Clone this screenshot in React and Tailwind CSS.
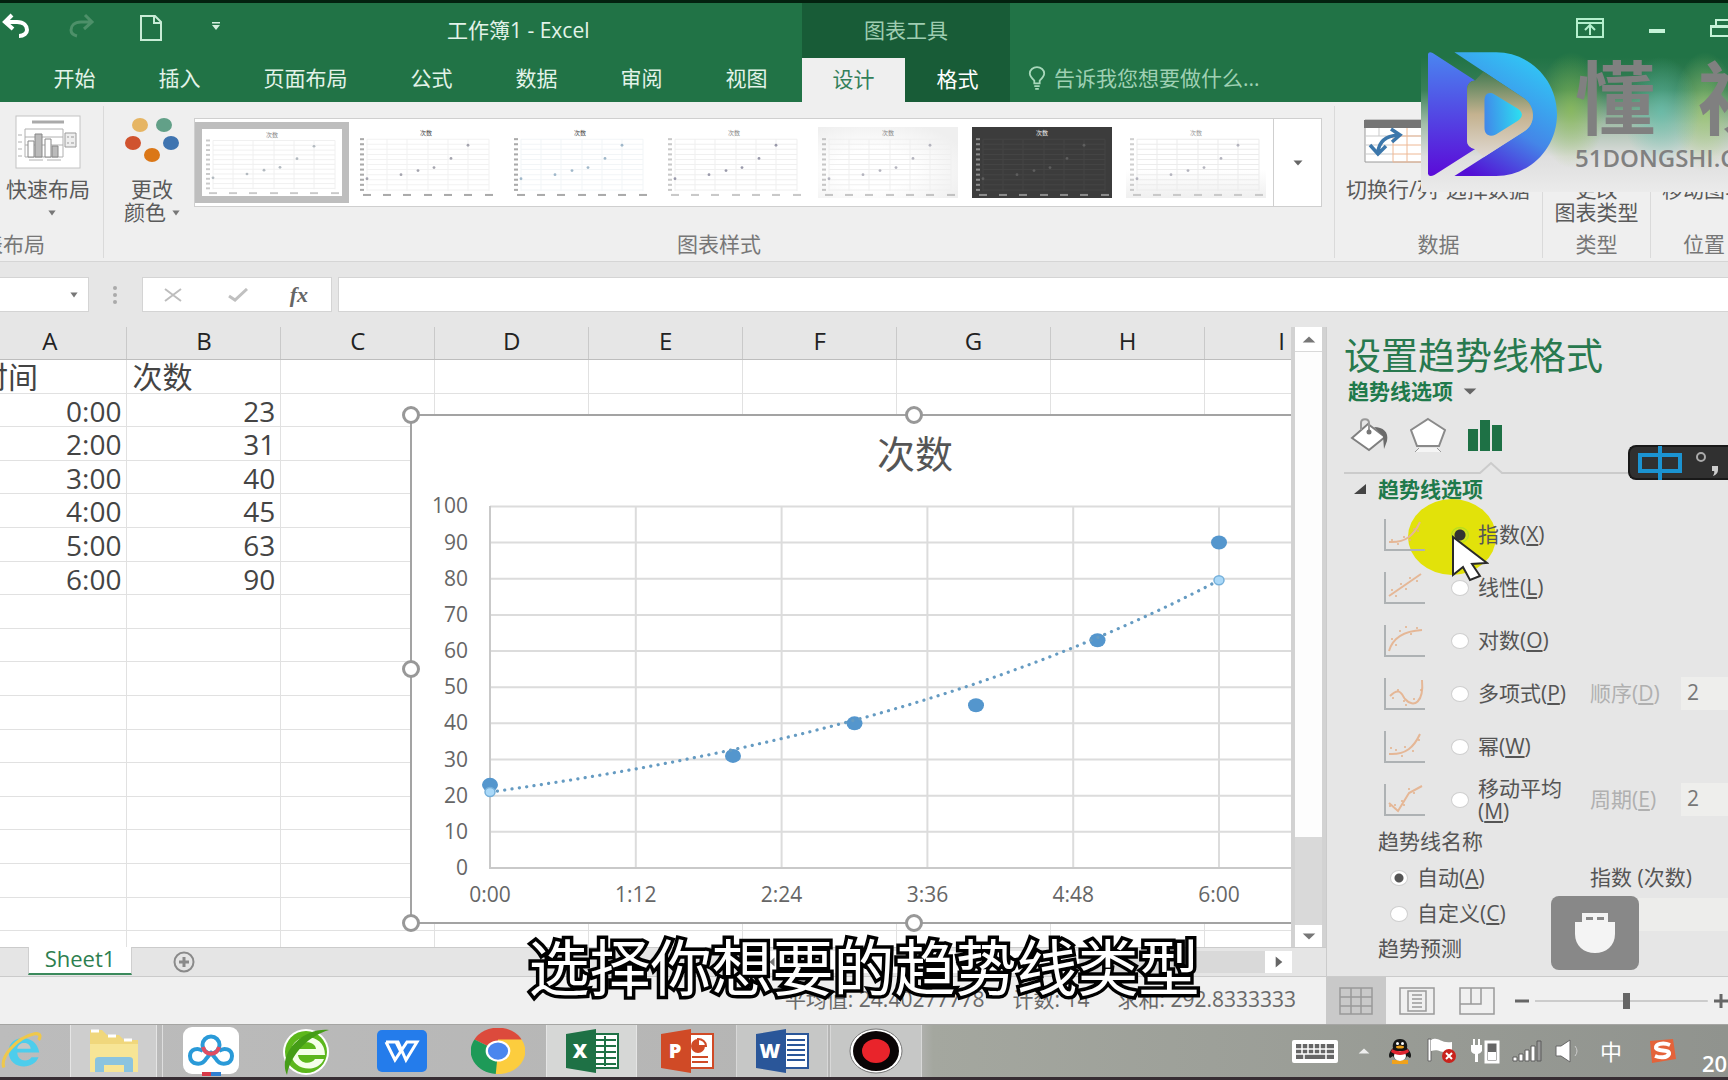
import React from "react";

const TABS = [
  ["开始", "w-[105px]"],
  ["插入", "w-[105px]"],
  ["页面布局", "w-[147px]"],
  ["公式", "w-[105px]"],
  ["数据", "w-[105px]"],
  ["审阅", "w-[105px]"],
  ["视图", "w-[105px]"],
];

const ROWS = [
  ["时间", "次数"],
  ["0:00", "23"],
  ["2:00", "31"],
  ["3:00", "40"],
  ["4:00", "45"],
  ["5:00", "63"],
  ["6:00", "90"],
];

const COLUMNS = ["A", "B", "C", "D", "E", "F", "G", "H", "I"];

const POINTS = [
  [0, 23],
  [2, 31],
  [3, 40],
  [4, 45],
  [5, 63],
  [6, 90],
];

function Caret({ className = "" }) {
  return (
    <svg className={className} width="10" height="6" viewBox="0 0 10 6" preserveAspectRatio="none" aria-hidden="true">
      <path d="M0.5 0.5h9L5 5.5z" fill="currentColor" />
    </svg>
  );
}

function Header() {
  return (
    <header className="flex h-[102px] shrink-0 border-t-[3px] border-[#03210f] bg-[#217346] text-[21px] leading-6 text-[#e3f3e9]">
      <div className="flex w-[802px] shrink-0 flex-col">
        <div className="flex h-[53px] items-center">
          <button aria-label="撤消" className="ml-px w-7 pb-2">
            <svg width="28" height="26" viewBox="0 0 28 26" fill="none" stroke="#fff" strokeWidth="4">
              <path d="M11 2 4 9l8 7M5 9h11c7 0 10 4 10 8 0 3-3 6-8 6" />
            </svg>
          </button>
          <button aria-label="恢复" className="ml-[39px] w-7 pb-2">
            <svg width="28" height="26" viewBox="0 0 28 26" fill="none" stroke="#4d9069" strokeWidth="3">
              <path d="M17 2l7 7-8 7M24 9H13c-7 0-10 4-10 8 0 3 2 5 6 6" />
            </svg>
          </button>
          <button aria-label="新建" className="ml-[43px] w-6 pb-1">
            <svg width="24" height="28" viewBox="0 0 24 28" fill="none" stroke="#c8ecd6" strokeWidth="2">
              <path d="M2 2h14l6 6v18H2zM15 2v7h7" />
            </svg>
          </button>
          <button aria-label="自定义快速访问工具栏" className="ml-12 pb-2">
            <svg width="10" height="8" viewBox="0 0 10 8">
              <path d="M1 0h8v1.500H1zM1 3h8L5 8z" fill="#d5efdf" />
            </svg>
          </button>
          <h1 className="ml-[226px] whitespace-nowrap">工作簿1 - Excel</h1>
        </div>
        <nav className="flex h-[46px] pl-[22px]">
          {TABS.map(([name, w]) => (
            <button key={name} className={`${w} shrink-0 pb-0.5`}>
              {name}
            </button>
          ))}
        </nav>
      </div>
      <div className="flex w-52 shrink-0 flex-col bg-[#185c37]">
        <div className="flex h-[55px] items-center justify-center pb-0.5 text-[#9fcdb1]">图表工具</div>
        <div className="flex h-[44px]">
          <button className="w-[103px] bg-[#efefef] pb-0.5 text-[#33805a]">设计</button>
          <button className="flex-1 pb-0.5 text-white">格式</button>
        </div>
      </div>
      <div className="flex flex-1 flex-col">
        <div className="flex h-[53px] items-center justify-end gap-[45px] overflow-hidden pb-1">
          <button aria-label="功能区显示选项">
            <svg width="28" height="20" viewBox="0 0 28 20" fill="none" stroke="#b4efcd" strokeWidth="2">
              <path d="M1 1h26v18H1zM1 5h26M14 17V8M9 12l5-5 5 5" />
            </svg>
          </button>
          <button aria-label="最小化">
            <svg width="16" height="20" viewBox="0 0 16 20">
              <path d="M0 11h16v4H0z" fill="#c5f3d8" />
            </svg>
          </button>
          <button aria-label="还原" className="w-[18px] overflow-hidden">
            <svg width="28" height="20" viewBox="0 0 28 20" fill="none" stroke="#c5f3d8" strokeWidth="2">
              <path d="M1 8h18v10H1zM1 9h18M6 7V2h19v12h-5" />
            </svg>
          </button>
        </div>
        <label className="flex h-[46px] items-center gap-2 pb-0.5 pl-[18px] text-[#9fd0b3]">
          <svg width="18" height="24" viewBox="0 0 20 26" fill="none" stroke="#a8d8bb" strokeWidth="2">
            <path d="M7 19v-3c-3-3-5-5-5-8a8 7 0 0 1 16 0c0 3-2 5-5 8v3zM7 19h6M7 22h6M8 25h4" />
          </svg>
          <input
            aria-label="告诉我您想要做什么"
            placeholder="告诉我您想要做什么..."
            className="w-60 bg-transparent outline-none placeholder:text-[#9fd0b3]"
          />
        </label>
      </div>
    </header>
  );
}

const THUMB_STYLES = [
  { fill: "#ffffff", dot: "#b3bac0", grid: "#f0f0f0", text: "#888" },
  { fill: "#ffffff", dot: "#a4a4ae", grid: "#f2f2f2", text: "#444" },
  { fill: "#ffffff", dot: "#a0b8ca", grid: "#f2f5f7", text: "#444" },
  { fill: "#ffffff", dot: "#99a", grid: "#f0f0f0", text: "#888" },
  { fill: "url(#vignette)", dot: "#b4b4be", grid: "#efefef", text: "#888" },
  { fill: "#3c3c3c", dot: "#5e5e5e", grid: "#444444", text: "#eee" },
  { fill: "url(#floor)", dot: "#b4b4be", grid: "#ececec", text: "#999" },
];

function Thumb({ fill, dot, grid, text }) {
  const xs = [11, 31, 51, 72, 92, 112, 133];
  const ys = [12, 17, 22, 27, 32, 37, 42, 47, 52, 57, 62];
  return (
    <svg className="h-full w-full" viewBox="0 0 140 70" preserveAspectRatio="none" aria-hidden="true">
      <defs>
        <radialGradient id="vignette" cx="0.4" cy="0.6" r="0.7">
          <stop offset="0.4" stopColor="#fff" />
          <stop offset="1" stopColor="#efefef" />
        </radialGradient>
        <linearGradient id="floor" x1="0" y1="0" x2="0" y2="1">
          <stop offset="0.6" stopColor="#fff" />
          <stop offset="1" stopColor="#f0f0f0" />
        </linearGradient>
      </defs>
      <rect width="140" height="70" fill={fill} />
      <path
        d={xs.map((x) => `M${x} 12V63`).join("") + ys.map((y) => `M11 ${y}H133`).join("")}
        stroke={grid}
        fill="none"
      />
      <text x="70" y="8" textAnchor="middle" fontSize="6" fill={text}>
        次数
      </text>
      <g fill={text} opacity="0.45">
        {ys.map((y) => (
          <rect key={y} x="4" y={y - 1} width="4" height="2" />
        ))}
        {xs.map((x) => (
          <rect key={x} x={x - 4} y="66" width="8" height="2" />
        ))}
      </g>
      {[[11, 51], [45, 47], [62, 43], [78, 40], [95, 31], [112, 18]].map(([x, y]) => (
        <circle key={x} cx={x} cy={y} r="1.400" fill={dot} />
      ))}
    </svg>
  );
}

function RibbonButton({ icon, lines, caret, className = "" }) {
  return (
    <button className={`flex shrink-0 flex-col items-center justify-start whitespace-nowrap ${className}`}>
      <span className="flex h-[63px] items-end">{icon}</span>
      <span className="mt-[9px] block leading-[23px]">{lines[0]}</span>
      <span className="flex h-[23px] items-center leading-[23px]">
        {lines[1]}
        {caret && <Caret className={lines[1] ? "ml-1.5 w-2 text-[#777]" : "ml-2 w-2 text-[#777]"} />}
      </span>
    </button>
  );
}

function Group({ label, className = "", children }) {
  return (
    <section className={`flex h-[152px] shrink-0 flex-col border-r border-[#dadada] ${className}`}>
      <div className="flex h-[124px]">{children}</div>
      <div className="pt-0.5 text-center leading-7 text-[#777]">{label}</div>
    </section>
  );
}

const layoutIcon = (
  <svg width="66" height="54" viewBox="0 0 66 54">
    <rect x="1" y="1" width="64" height="52" fill="#fff" stroke="#c4c4c4" />
    <path d="M17 7h32" stroke="#aaa" strokeWidth="3" />
    <path d="M10 14h38v28H10zM10 22h38M10 30h38M3 20h4M3 27h4M3 34h4M3 41h4M14 45h14M32 45h14" stroke="#b0b0b0" fill="none" />
    <path d="M13 26h6v16h-6zM30 24h6v18h-6z" fill="#fff" stroke="#888" />
    <path d="M20 19h7v23h-7zM37 31h6v11h-6z" fill="#bbb" stroke="#888" />
    <path d="M50 18h11v14H50zM52 22h2m2 0h3M52 28h2m2 0h3" stroke="#999" fill="#eee" />
  </svg>
);

const colorsIcon = (
  <svg width="54" height="46" viewBox="0 0 54 46">
    <ellipse cx="15" cy="8" rx="8" ry="7" fill="#e6b563" />
    <ellipse cx="39" cy="8" rx="8" ry="7" fill="#62a088" />
    <ellipse cx="8" cy="26" rx="8" ry="7" fill="#d0532f" />
    <ellipse cx="46" cy="26" rx="8" ry="7" fill="#3f74b0" />
    <ellipse cx="27" cy="38" rx="8" ry="7" fill="#db7717" />
  </svg>
);

const swapIcon = (
  <svg width="64" height="44" viewBox="0 0 64 44">
    <path d="M1 1h62v42H1z" fill="#fff" stroke="#9a9a9a" />
    <path d="M0 1h64v8H0z" fill="#757575" />
    <path d="M1 17h62M1 26h28M1 35h28M15 9v8" stroke="#c9c9c9" />
    <path d="M29 17h29v26H29zM29 26h29M29 35h29M43 9v34" stroke="#eeb894" fill="none" />
    <path d="M14 33c1-10 7-16 20-17M6 26l8 9 8-8M27 10l9 6-8 7" stroke="#3c77ab" strokeWidth="3.500" fill="none" />
  </svg>
);

function Ribbon() {
  return (
    <div className="relative flex h-[160px] shrink-0 overflow-hidden border-b border-[#d5d5d5] bg-[#efefef] pt-1 text-[21px] leading-[30px] text-[#5a5a5a]">
      <Group label="图表布局" className="-ml-[97px] w-[201px]">
        <RibbonButton className="ml-[103px]" icon={layoutIcon} lines={["快速布局", ""]} caret />
      </Group>
      <Group label={<span>图表样式</span>} className="w-[1231px]">
        <RibbonButton className="ml-4 w-16" icon={<span className="mb-1.5 flex">{colorsIcon}</span>} lines={["更改", "颜色"]} caret />
        <div className="ml-[10px] mt-3 flex h-[89px] w-[1128px] border border-[#cfcfcf] bg-white">
          {THUMB_STYLES.map((s, i) => (
            <button
              key={i}
              aria-label={`样式 ${i + 1}`}
              className={`mt-[3px] h-[81px] w-[154px] shrink-0 ${i === 0 ? "border-[7px] border-[#bebebe]" : "px-[7px] py-[5px]"}`}
            >
              <Thumb {...s} />
            </button>
          ))}
          <button aria-label="更多样式" className="flex flex-1 items-center justify-center border-l border-[#cfcfcf] text-[#666]">
            <Caret />
          </button>
        </div>
      </Group>
      <Group label="数据" className="w-[208px]">
        <RibbonButton className="ml-[11px]" icon={<span className="mb-[6px] ml-2 flex">{swapIcon}</span>} lines={["切换行/列", ""]} />
        <RibbonButton className="ml-2" icon={null} lines={["选择数据", ""]} />
      </Group>
      <Group label="类型" className="w-[108px]">
        <RibbonButton className="mx-auto" icon={null} lines={["更改", "图表类型"]} />
      </Group>
      <Group label="位置" className="w-[107px]">
        <RibbonButton className="ml-[11px]" icon={null} lines={["移动图表", ""]} />
      </Group>
    </div>
  );
}

function Watermark() {
  return (
    <div className="absolute right-0 top-[50px] flex h-[142px] w-[307px] overflow-hidden bg-[radial-gradient(ellipse_34px_58px_at_150px_60px,#8fc04daa,transparent),radial-gradient(ellipse_38px_55px_at_240px_62px,#62c3b4aa,transparent),radial-gradient(ellipse_32px_60px_at_284px_62px,#a8cf70aa,transparent),linear-gradient(#217346_5%,#388057_28%,#a3bda9_52%,#dedede_75%,#ebebeb)]">
      <svg className="ml-[7px] mt-[2px] shrink-0" width="129" height="124" viewBox="564 154 386 371" aria-label="懂视">
        <defs>
          <linearGradient id="wmLeft" x1="0" y1="0" x2="0" y2="1">
            <stop offset="0" stopColor="#4a86f0" />
            <stop offset="1" stopColor="#5b0bd8" />
          </linearGradient>
          <linearGradient id="wmRight" x1="0.7" y1="0" x2="0.2" y2="1">
            <stop offset="0" stopColor="#30c8f5" />
            <stop offset="0.55" stopColor="#4486e8" />
            <stop offset="1" stopColor="#530fd5" />
          </linearGradient>
          <linearGradient id="wmPlay" x1="0" y1="0.6" x2="1" y2="0.5">
            <stop offset="0" stopColor="#4188ea" />
            <stop offset="1" stopColor="#2ce0f0" />
          </linearGradient>
          <linearGradient id="wmRing" x1="0" y1="0" x2="0" y2="1">
            <stop offset="0" stopColor="#437a51" />
            <stop offset="0.5" stopColor="#c4b28f" />
            <stop offset="1" stopColor="#e0d9d2" />
          </linearGradient>
        </defs>
        <path d="M564 160q2-8 14-3l127 82q-23 2-24 26v155q1 20 24 24l-122 78q-17 7-19-4z" fill="url(#wmLeft)" />
        <path d="M643 155h125c98 0 182 80 182 185s-84 185-182 185H643l208-133c36-22 36-75 0-100z" fill="url(#wmRight)" />
        <path d="M705 239q-23 2-24 26v155q1 20 24 24l25 25 121-77c36-22 36-75 0-100L730 212z" fill="url(#wmRing)" />
        <path d="M733 300c0-22 14-29 30-19l70 43c16 11 16 25 0 36l-66 41c-20 9-34 0-34-20z" fill="url(#wmPlay)" />
      </svg>
      <div className="ml-[18px] mt-1 shrink-0 whitespace-nowrap font-semibold text-[#808080]">
        <div className="flex gap-[42px] text-[80px] font-bold leading-[86px]">
          <span>懂</span>
          <span>视</span>
        </div>
        <div className="text-2xl leading-9">51DONGSHI.COM</div>
      </div>
    </div>
  );
}

function FormulaBar() {
  return (
    <div className="flex h-[65px] shrink-0 items-start bg-[#e6e6e6] pt-[15px]">
      <div className="flex h-[35px] w-[89px] items-center justify-end border border-l-0 border-[#d4d4d4] bg-white pr-2.5 text-[#777]">
        <input aria-label="名称框" className="w-14 bg-transparent outline-none" />
        <Caret className="w-2" />
      </div>
      <svg className="ml-[23px] mt-2" width="6" height="20" viewBox="0 0 6 20" fill="#aaa">
        <circle cx="3" cy="3" r="2" />
        <circle cx="3" cy="10" r="2" />
        <circle cx="3" cy="17" r="2" />
      </svg>
      <div className="ml-6 flex h-[35px] w-[190px] items-center justify-between border border-[#d4d4d4] bg-white px-[21px]">
        <button aria-label="取消">
          <svg width="18" height="14" viewBox="0 0 18 14" stroke="#bdbdbd" strokeWidth="2">
            <path d="M1 1l16 12M17 1 1 13" />
          </svg>
        </button>
        <button aria-label="输入" className="ml-1">
          <svg width="20" height="14" viewBox="0 0 20 14" stroke="#c0c0c0" strokeWidth="3" fill="none">
            <path d="M1 8l6 4L19 1" />
          </svg>
        </button>
        <button className="pr-0.5 font-['Liberation_Serif',serif] text-[22px] font-bold italic leading-6 text-[#666]">fx</button>
      </div>
      <input aria-label="编辑栏" className="ml-[6px] h-[35px] min-w-0 flex-1 border border-r-0 border-[#d4d4d4] bg-white outline-none" />
    </div>
  );
}

/* Plot origin is (79, 453) in chart coordinates; one hour is 121.5 wide and one unit 3.616 high. */
const px = (h) => 79 + h * 121.5;
const py = (v) => 453 - v * 3.616;

function Chart() {
  const trend = Array.from({ length: 61 }, (_, i) => {
    const h = i / 10;
    return `${i ? "L" : "M"}${px(h).toFixed(1)} ${py(21 * Math.exp(0.222 * h)).toFixed(1)}`;
  }).join("");
  const ticks = Array.from({ length: 11 }, (_, i) => i * 10);
  const handles = [[0, 0], [503, 0], [0, 254], [0, 508], [503, 508]];
  return (
    <svg className="absolute left-[402px] top-[79px]" width="1020" height="526" viewBox="-9 -9 1020 526" role="img" aria-label="次数">
      <rect x="0" y="0" width="1006" height="508" fill="#fff" stroke="#a3a3a3" strokeWidth="2" />
      <path
        d={ticks.map((t) => `M79 ${py(t)}H926`).join("") + [0, 1, 2, 3, 4, 5].map((i) => `M${79 + i * 145.8} 91V453`).join("")}
        stroke="#dcdcdc"
        strokeWidth="2"
      />
      <path d="M79 91V453H926" stroke="#c9c9c9" strokeWidth="2" fill="none" />
      <text x="504" y="53" textAnchor="middle" fontSize="38" fill="#555">
        次数
      </text>
      <g fontSize="21" fill="#666">
        {ticks.map((t) => (
          <text key={t} x="57" y={py(t) + 7} textAnchor="end">
            {t}
          </text>
        ))}
        {["0:00", "1:12", "2:24", "3:36", "4:48", "6:00"].map((t, i) => (
          <text key={t} x={79 + i * 145.8} y="487" textAnchor="middle">
            {t}
          </text>
        ))}
      </g>
      {POINTS.map(([h, v]) => (
        <ellipse key={h} cx={px(h)} cy={py(v)} rx="8" ry="7" fill="#5496cd" />
      ))}
      <path d={trend} fill="none" stroke="#659bc2" strokeWidth="3.200" strokeLinecap="round" strokeDasharray="0.1 7.300" />
      {[[0, 21], [6, 79.6]].map(([h, v]) => (
        <ellipse key={h} cx={px(h)} cy={py(v)} rx="5" ry="4.500" fill="#a9d8f8" stroke="#76b0da" strokeWidth="1.500" />
      ))}
      {handles.map(([x, y]) => (
        <circle key={`${x}-${y}`} cx={x} cy={y} r="7.500" fill="#fff" stroke="#989898" strokeWidth="3" />
      ))}
    </svg>
  );
}

function Sheet() {
  return (
    <div className="flex min-w-0 flex-1 flex-col">
      <div className="flex min-h-0 flex-1">
        <div className="relative min-w-0 flex-1 overflow-hidden bg-white">
          <table className="-ml-[27px] w-[1386px] table-fixed border-collapse text-[28px] text-[#444]">
            <thead>
              <tr className="h-8 bg-[#e6e6e6]">
                {COLUMNS.map((c) => (
                  <th key={c} className="h-8 border-b border-r border-b-[#bdbdbd] border-r-[#c9c9c9] p-0 pb-1 text-2xl font-normal leading-[26px] text-[#222]">
                    {c}
                  </th>
                ))}
              </tr>
            </thead>
            <tbody>
              {Array.from({ length: 18 }, (_, r) => (
                <tr key={r} className={r % 5 === 1 || r % 5 === 3 ? "h-[33px]" : "h-[34px]"}>
                  {COLUMNS.map((c, i) => (
                    <td
                      key={c}
                      className={`border-b border-r border-[#e1e1e1] px-[5px] pb-0 pt-0.5 leading-[30px] ${r === 0 ? "text-left text-[30px]" : "text-right"}`}
                    >
                      {ROWS[r] && ROWS[r][i]}
                    </td>
                  ))}
                </tr>
              ))}
            </tbody>
          </table>
          <Chart />
        </div>
        <div className="flex w-[35px] shrink-0 flex-col border-l-4 border-r-4 border-[#d2d2d2] bg-[#d9d9d9] text-[#777]">
          <button aria-label="向上滚动" className="flex h-6 items-center justify-center bg-white">
            <Caret className="h-[7px] w-3.5 rotate-180" />
          </button>
          <div className="mt-px h-[485px] bg-[#fdfdfd]" />
          <button aria-label="向下滚动" className="mt-auto flex h-[22px] items-center justify-center bg-white">
            <Caret className="h-[7px] w-3.5" />
          </button>
        </div>
      </div>
      <div className="flex h-[30px] shrink-0 border-b border-t border-[#cbcbcb] bg-[#e5e5e5]">
        <button className="-mt-px ml-7 h-7 w-[104px] border-x border-b-2 border-x-[#cfcfcf] border-b-[#3b8a5c] bg-white pb-1 text-[22px] leading-[22px] text-[#2d7f50]">
          Sheet1
        </button>
        <button aria-label="新工作表" className="ml-[41px]">
          <svg width="22" height="22" viewBox="0 0 22 22" fill="none" stroke="#8a8a8a" strokeWidth="2">
            <circle cx="11" cy="11" r="9.500" />
            <path d="M6 11h10M11 6v10" strokeWidth="3" />
          </svg>
        </button>
        <div className="ml-auto mr-[34px] mt-[3px] flex h-[22px] w-[534px]">
          <button aria-label="向左滚动" className="flex w-[27px] items-center justify-center bg-white text-[#777]">
            <Caret className="rotate-90" />
          </button>
          <div className="ml-1 flex flex-1 bg-[#d9d9d9]">
            <div className="w-[290px] bg-white" />
          </div>
          <button aria-label="向右滚动" className="flex w-[27px] items-center justify-center bg-white text-[#666]">
            <Caret className="h-2 w-3 -rotate-90" />
          </button>
        </div>
      </div>
    </div>
  );
}

const FITS = [
  { id: "exp", name: "指数", k: "X", d: "M5 23C22 24 30 16 36 3", dots: [[8, 21], [14, 25], [20, 18], [26, 21], [30, 10], [34, 12]] },
  { id: "lin", name: "线性", k: "L", d: "M5 24 37 2", dots: [[8, 18], [12, 24], [17, 12], [22, 17], [26, 6], [33, 9]] },
  { id: "log", name: "对数", k: "O", d: "M5 26C9 12 20 6 38 5", dots: [[8, 14], [12, 20], [16, 6], [22, 2], [27, 9], [33, 3]] },
  { id: "poly", name: "多项式", k: "P", d: "M6 18C16 8 18 17 21 21C30 31 40 24 38 2", dots: [[9, 20], [14, 12], [20, 23], [22, 27], [30, 21], [37, 12]], side: "顺序", sk: "D" },
  { id: "pow", name: "幂", k: "W", d: "M5 23C22 24 30 16 36 3", dots: [[7, 17], [12, 19], [18, 25], [21, 16], [29, 20], [35, 9]] },
  { id: "ma", name: "移动平均", k: "M", d: "M5 19l9 8 11-18 13-7", dots: [[6, 22], [11, 21], [18, 17], [20, 21], [25, 5], [30, 9]], side: "周期", sk: "E" },
];

const radioClass =
  "h-4 w-[18px] shrink-0 appearance-none rounded-[50%] border border-[#cfcfcf] bg-white";

function Key({ name, k }) {
  return (
    <>
      {name}(<u className="underline-offset-2">{k}</u>)
    </>
  );
}

function Pane() {
  return (
    <aside className="relative w-[402px] shrink-0 overflow-hidden border-b border-l border-[#cbcbcb] bg-[#e6e6e6] pl-[17px] text-[21px] text-[#555]">
      <h2 className="pt-[9px] text-[37px] leading-10 text-[#28794e]">设置趋势线格式</h2>
      <button className="ml-1 mt-0.5 flex items-center gap-2.5 font-bold leading-[26px] text-[#1f7a4b]">
        趋势线选项
        <Caret className="h-[7px] w-3.5 text-[#666]" />
      </button>
      <div className="mt-[13px] flex h-9 items-center pl-[6px]">
        <button aria-label="填充与线条">
          <svg width="40" height="34" viewBox="0 0 40 34">
            <path d="M2 20 18 6l17 13-16 13z" fill="#fff" stroke="#808080" strokeWidth="2" />
            <path d="M11 12V5c0-5 8-5 8 0v8" fill="none" stroke="#999" strokeWidth="2" />
            <circle cx="19" cy="14" r="2.500" fill="#777" />
            <path d="M24 9c9 0 15 5 13 14l-3 8-1-13z" fill="#6b6b6b" />
          </svg>
        </button>
        <button aria-label="效果" className="ml-5">
          <svg width="36" height="36" viewBox="0 0 36 36">
            <path d="M18 2 35 13l-6 16H7L1 13z" fill="#fff" stroke="#8a8a8a" strokeWidth="2" />
            <path d="M8 31h20l3 4H5z" fill="#f5f5f5" />
            <path d="M9 31l-4 4M27 31l4 4" stroke="#999" />
          </svg>
        </button>
        <button aria-label="趋势线选项" className="ml-[21px]">
          <svg width="36" height="32" viewBox="0 0 36 32" fill="#1e7145">
            <path d="M1 10h10v22H1zM13 1h10v31H13zM25 6h10v26H25z" />
          </svg>
        </button>
      </div>
      <svg className="mt-2 block" width="384" height="14" viewBox="0 0 384 14" fill="none" stroke="#cbcbcb" strokeWidth="2">
        <path d="M0 12h136l11-10 11 10h226" />
      </svg>
      <h3 className="mt-px flex items-center gap-3 pl-[10px] font-bold leading-[26px] text-[#1f7a4b]">
        <svg width="12" height="10" viewBox="0 0 12 10">
          <path d="M12 0v10H0z" fill="#444" />
        </svg>
        趋势线选项
      </h3>
      <div className="absolute left-[81px] top-[172px] h-[76px] w-[88px] rounded-[50%] bg-[#e2e20a]" />
      <div className="relative mt-[6px]">
        {FITS.map((f) => (
          <div key={f.id} className="flex h-[53px] items-center">
            <svg className="ml-[40px] shrink-0" width="41" height="32" viewBox="0 0 41 32" fill="none">
              <path d="M1 0v31h40" stroke="#aeb2b4" strokeWidth="2" />
              <path d={f.d} stroke="#e5b796" strokeWidth="2" />
              {f.dots.map(([x, y]) => (
                <circle key={x} cx={x} cy={y} r="1" fill="#e3b08a" />
              ))}
            </svg>
            <label className="ml-[26px] flex w-[139px] shrink-0 items-center gap-[9px] leading-[23px]">
              <input
                type="radio"
                name="fit"
                defaultChecked={f.id === "exp"}
                className={
                  f.id === "exp"
                    ? "h-4 w-[18px] shrink-0 appearance-none rounded-[50%] border border-[#b4dc1e] bg-[#d3e01c] checked:bg-[radial-gradient(circle,#333_0_5px,#d3e01c_6px)]"
                    : `${radioClass} checked:bg-[radial-gradient(circle,#444_0_5px,#fff_6px)]`
                }
              />
              <span className={f.id === "ma" ? "w-[90px]" : "whitespace-nowrap"}>
                <Key name={f.name} k={f.k} />
              </span>
            </label>
            {f.side && (
              <label className="flex items-center text-[#b0b0b0]">
                <span className="w-[91px] whitespace-nowrap">
                  <Key name={f.side} k={f.sk} />
                </span>
                <input disabled defaultValue="2" className="h-[33px] w-[60px] bg-[#eeeeec] px-1.5 pb-1 text-[#777]" />
              </label>
            )}
          </div>
        ))}
      </div>
      <h4 className="ml-[34px] mt-0.5 leading-[26px]">趋势线名称</h4>
      <div className="mt-[3px] pl-[46px]">
        <div className="flex h-[38px] items-center pt-1">
          <label className="flex w-[200px] items-center gap-[9px]">
            <input
              type="radio"
              name="title"
              defaultChecked
              className={`${radioClass} checked:bg-[radial-gradient(circle,#555_0_4px,#fff_5px)]`}
            />
            <span>
              <Key name="自动" k="A" />
            </span>
          </label>
          <span className="whitespace-nowrap">指数 (次数)</span>
        </div>
        <div className="flex h-[38px] items-center">
          <label className="flex w-[200px] items-center gap-[9px]">
            <input type="radio" name="title" className={`${radioClass} checked:bg-[radial-gradient(circle,#555_0_4px,#fff_5px)]`} />
            <span>
              <Key name="自定义" k="C" />
            </span>
          </label>
          <input disabled aria-label="自定义名称" className="h-[33px] w-40 bg-[#ededeb]" />
        </div>
      </div>
      <h4 className="ml-[34px] leading-[30px]">趋势预测</h4>

      <svg className="absolute left-[124px] top-[208px]" width="38" height="48" viewBox="0 0 38 48">
        <path d="M2 2v38l10-8 7 13 10-4-8-12 15-1z" fill="#fff" stroke="#2a2a2a" strokeWidth="2" />
      </svg>
      <div className="absolute right-0 top-[118px] flex h-[35px] w-[100px] items-center rounded-l-lg border-2 border-r-0 border-[#191919] bg-[#303030]">
        <svg width="98" height="34" viewBox="0 0 98 34" fill="none">
          <path d="M10 9h40v16H10zM30 0v34" stroke="#1b93d1" strokeWidth="4" />
          <circle cx="71" cy="11" r="4" stroke="#aaa" strokeWidth="2" />
          <path d="M82 20h6v4q0 4-5 6 2-4 1-5h-2z" fill="#ccc" />
        </svg>
      </div>
      <div className="absolute left-[224px] top-[569px] flex h-[74px] w-[88px] items-center justify-center rounded-lg bg-[#888]">
        <svg width="42" height="42" viewBox="0 0 42 42">
          <path d="M8 1h26v9h7v12C41 34 32 41 21 41S1 34 1 22V10h7z" fill="#f4f4f4" />
          <path d="M12 5h7v3h-7zM23 5h7v3h-7z" fill="#888" />
        </svg>
      </div>
    </aside>
  );
}

function StatusBar() {
  return (
    <footer className="flex h-[47px] shrink-0 bg-[#f0f0f0] text-[21px] leading-[45px] text-[#6a6a6a]">
      <div className="flex flex-1 justify-end gap-7 whitespace-nowrap pr-[30px]">
        <span>平均值: 24.40277778</span>
        <span>计数: 14</span>
        <span>求和: 292.8333333</span>
      </div>
      <div className="flex w-[402px] shrink-0 items-center">
        <button aria-label="普通" className="flex h-full w-[61px] items-center justify-center bg-[#c9c9c9]">
          <svg width="34" height="28" viewBox="0 0 34 28" fill="none" stroke="#999" strokeWidth="1.500">
            <path d="M1 1h32v26H1zM12 1v26M22 1v26M1 10h32M1 19h32" />
          </svg>
        </button>
        <button aria-label="页面布局" className="ml-[13px]">
          <svg width="36" height="28" viewBox="0 0 36 28" fill="none" stroke="#999" strokeWidth="1.500">
            <path d="M1 1h34v26H1zM9 4h18v20H9zM13 8h10M13 12h10M13 16h10M13 20h10" />
          </svg>
        </button>
        <button aria-label="分页预览" className="ml-6">
          <svg width="36" height="28" viewBox="0 0 36 28" fill="none" stroke="#999" strokeWidth="1.500">
            <path d="M1 1h34v26H1zM12 1v16M22 1v16H1" />
          </svg>
        </button>
        <button aria-label="缩小" className="ml-5">
          <svg width="14" height="14" viewBox="0 0 14 14">
            <path d="M0 5.500h14v3H0z" fill="#666" />
          </svg>
        </button>
        <input
          type="range"
          aria-label="显示比例"
          defaultValue="53"
          className="mx-[6px] h-4 w-[174px] appearance-none bg-[linear-gradient(#ccc,#ccc)] bg-[length:100%_2px] bg-center bg-no-repeat [&::-webkit-slider-thumb]:h-4 [&::-webkit-slider-thumb]:w-[7px] [&::-webkit-slider-thumb]:appearance-none [&::-webkit-slider-thumb]:bg-[#666]"
        />
        <button aria-label="放大">
          <svg width="14" height="14" viewBox="0 0 14 14">
            <path d="M0 5.500h5.500V0h3v5.500H14v3H8.500V14h-3V8.500H0z" fill="#666" />
          </svg>
        </button>
      </div>
    </footer>
  );
}

function OfficeIcon({ color, letter, children }) {
  return (
    <svg width="54" height="44" viewBox="0 0 54 44">
      <path d="M28 5h25v34H28z" fill="#fff" stroke={color} strokeWidth="2" />
      <g stroke={color} fill={color} strokeWidth="2">
        {children}
      </g>
      <path d="M1 5 31 0v44L1 39z" fill={color} />
      <text x="15" y="29" textAnchor="middle" fontSize="20" fontWeight="800" fill="#fff">
        {letter}
      </text>
    </svg>
  );
}

function Taskbar() {
  const slot = "flex h-full shrink-0 items-center justify-center";
  return (
    <div className="flex h-[56px] shrink-0 overflow-hidden border-b-[3px] border-t border-b-[#372d33] border-t-[#a5a5a3] bg-[linear-gradient(90deg,#bcbcbc,#b4b4b3_53%,#a4a79f_54%,#90938e)]">
      <button aria-label="Internet Explorer" className={`${slot} w-[70px] pr-[26px]`}>
        <svg width="56" height="50" viewBox="0 0 56 50" fill="none">
          <path d="M50 27H22c0 11 13 13 18 6h9C43 50 11 49 11 26S46 2 50 27" fill="#4dcdec" />
          <path d="M22 22h17c-1-10-16-9-17 0z" fill="#c6c6c4" />
          <path d="M5 46C0 34 20 8 44 3c8-1 8 4 5 8" stroke="#efc84b" strokeWidth="4" />
        </svg>
      </button>
      <button aria-label="文件资源管理器" className={`${slot} w-[87px] border-x border-[#e5e5e5] bg-[#cecece]`}>
        <svg width="52" height="46" viewBox="0 0 52 46">
          <path d="M2 2h12l5 5h12l5 5h14v32H2z" fill="#f0d77c" />
          <path d="M3 3h8M20 8h8M36 12h8" stroke="#fff" strokeWidth="3" />
          <path d="M2 16h48v28H2z" fill="#f7e596" />
          <path d="M7 44V32q0-3 4-3h30q4 0 4 3v12h-9v-7H16v7z" fill="#8bc4df" />
        </svg>
      </button>
      <button aria-label="百度网盘" className={`${slot} ml-[5px] w-24 border-l border-[#dedede]`}>
        <svg width="58" height="50" viewBox="0 0 58 50" fill="none">
          <rect x="1" y="1" width="56" height="47" rx="9" fill="#fff" />
          <path d="M37 25c5-4 13-2 13 5 0 9-12 10-16 3l-5-6-5 6c-4 7-16 6-16-3 0-7 8-9 13-5" stroke="#2a9ad8" strokeWidth="4" />
          <circle cx="29" cy="19" r="8.500" stroke="#2a9ad8" strokeWidth="4" />
          <path d="M21 21c2 9 14 9 16 0" stroke="#e14d62" strokeWidth="4" />
          <path d="M20 46h9v4h-9z" fill="#d83947" />
          <path d="M29 46h10v4H29z" fill="#2f7fd1" />
        </svg>
      </button>
      <button aria-label="浏览器" className={`${slot} w-24`}>
        <svg width="54" height="50" viewBox="0 0 54 50" fill="none">
          <circle cx="27" cy="26" r="23" fill="#fff" />
          <circle cx="27" cy="26" r="21" fill="#5cb71c" />
          <path d="M46 29H19c1 9 13 10 17 4h9C39 48 12 45 12 26 13 6 46 6 46 29z" fill="#f5ffe9" />
          <path d="M19 23h18c-1-9-17-9-18 0z" fill="#5cb71c" />
          <path d="M8 49C-2 28 24 1 50 4 32 9 12 26 8 49z" fill="#459d17" />
        </svg>
      </button>
      <button aria-label="WPS" className={`${slot} w-24`}>
        <svg width="52" height="44" viewBox="0 0 52 44" fill="none">
          <rect x="1" y="1" width="50" height="42" rx="5" fill="#247ceb" />
          <path d="M10 13h12l8 18 11-18H31L19 31 10 13M20 13l5 10" stroke="#fff" strokeWidth="3" />
        </svg>
      </button>
      <button aria-label="Chrome" className={`${slot} w-24`}>
        <svg width="54" height="46" viewBox="0 0 48 48" preserveAspectRatio="none">
          <path d="M24 24 3 12a24 24 0 0 1 42 0z" fill="#dc4a3c" />
          <path d="M24 24 3 12a24 24 0 0 0 19 36l9-14z" fill="#1e9a58" />
          <path d="M24 24 22 48A24 24 0 0 0 45 12H24z" fill="#fccd3e" />
          <circle cx="24" cy="24" r="11" fill="#fff" />
          <circle cx="24" cy="24" r="9" fill="#4a86ee" />
        </svg>
      </button>
      <button aria-label="Excel" className={`${slot} w-[91px] border-x border-[#e5e5e5] bg-[#d6d7d6]`}>
        <OfficeIcon color="#1e7145" letter="X">
          <path d="M29 11h22M29 17h22M29 23h22M29 29h22M29 35h22M40 7v30" />
        </OfficeIcon>
      </button>
      <button aria-label="PowerPoint" className={`${slot} w-[99px]`}>
        <OfficeIcon color="#d04a26" letter="P">
          <circle cx="38" cy="17" r="6" />
          <path d="M38 17V10a8 7 0 0 1 8 7z" fill="#fff" />
          <path d="M32 28h16M32 33h16" />
        </OfficeIcon>
      </button>
      <button aria-label="Word" className={`${slot} w-[92px] border-x border-[#d8d8d8] bg-[#c6c7c6]`}>
        <OfficeIcon color="#2a5699" letter="W">
          <path d="M32 11h18M32 16h18M32 21h18M32 26h18M32 31h18" />
        </OfficeIcon>
      </button>
      <button aria-label="录屏" className={`${slot} ml-0.5 w-[92px] border-x border-[#d8d8d8] bg-[#c6c7c6]`}>
        <svg width="54" height="46" viewBox="0 0 54 46">
          <ellipse cx="27" cy="23" rx="26" ry="22" fill="#fff" stroke="#777" />
          <ellipse cx="27" cy="23" rx="23" ry="20" fill="#0a0506" />
          <ellipse cx="27" cy="23" rx="14" ry="12" fill="#e9242b" />
        </svg>
      </button>
      <div className="ml-auto flex h-full shrink-0 items-center text-white">
        <button aria-label="触摸键盘">
          <svg width="48" height="25" viewBox="0 0 48 25">
            <rect x="1" y="1" width="46" height="23" rx="2" fill="#fff" />
            <path d="M5 5h38v15H5z" fill="#666" />
            <path d="M5 10h38M5 15h38M11 5v10M17 5v10M23 5v10M29 5v10M35 5v10M13 15v5M35 15v5" stroke="#fff" strokeWidth="1.500" />
          </svg>
        </button>
        <button aria-label="显示隐藏的图标" className="ml-[19px]">
          <Caret className="w-3 rotate-180 text-[#eee]" />
        </button>
        <svg className="ml-[17px]" width="26" height="26" viewBox="0 0 26 26">
          <path d="M5 24h8M13 24h8" stroke="#f0a21c" strokeWidth="4" />
          <path d="M13 1c6 0 8 5 7 9 4 4 5 8 3 10l-3-2c-2 6-12 6-14 0l-3 2c-2-2-1-6 3-10-1-4 1-9 7-9z" fill="#161616" />
          <ellipse cx="13" cy="18" rx="6" ry="5" fill="#fff" />
          <path d="M5 11c5 3 11 3 16 0l1 3c-6 4-12 4-18 0z" fill="#df2430" />
          <ellipse cx="13" cy="9" rx="4" ry="1.500" fill="#f0a21c" />
          <circle cx="10.500" cy="5.500" r="1.500" fill="#fff" />
          <circle cx="15.500" cy="5.500" r="1.500" fill="#fff" />
        </svg>
        <svg className="ml-[13px]" width="32" height="28" viewBox="0 0 32 28">
          <path d="M2 2h3v22H2z" fill="#fff" stroke="#666" />
          <path d="M5 3c8-4 9 4 21 2v10c-11 2-13-4-21-1z" fill="#fff" />
          <circle cx="23" cy="19" r="7" fill="#c9231d" />
          <path d="M20 16l6 6m0-6-6 6" stroke="#fff" strokeWidth="2" />
        </svg>
        <svg className="ml-3" width="30" height="26" viewBox="0 0 30 26" fill="none">
          <path d="M4 1v6M9 1v6" stroke="#fff" strokeWidth="2" />
          <path d="M1 7h11v6q-2 3-4 3v8H5v-8q-4-1-4-4z" fill="#fff" />
          <path d="M16 4h12v20H16z" stroke="#fff" strokeWidth="3" fill="#666" />
          <path d="M18 14h8v8h-8z" fill="#fff" />
        </svg>
        <svg className="ml-3" width="30" height="22" viewBox="0 0 30 22" fill="#fff" stroke="#5a5a5a">
          <path d="M1 17h4v4H1zM7 14h4v7H7zM13 10h4v11h-4zM19 6h4v15h-4z" />
          <path d="M25 1h4v20h-4z" fill="#999" />
        </svg>
        <svg className="ml-[13px]" width="26" height="24" viewBox="0 0 26 24">
          <path d="M1 7h5l9-6v22l-9-6H1z" fill="#fff" stroke="#666" />
          <path d="M20 7q4 5 0 10" fill="none" stroke="#ccc" />
        </svg>
        <span className="ml-[19px] text-[22px] leading-none">中</span>
        <svg className="ml-[25px]" width="30" height="26" viewBox="0 0 30 26">
          <path d="M3 3 26 1l3 20-24 4z" fill="#e4633a" />
          <path d="M23 7C16 4 8 6 9 10c2 4 14 1 13 6-2 4-9 4-14 2" fill="none" stroke="#fff" strokeWidth="4" />
        </svg>
        <span className="ml-[25px] w-[26px] overflow-hidden whitespace-nowrap pt-6 text-[22px] font-semibold leading-6">20</span>
      </div>
    </div>
  );
}

export default function App() {
  return (
    <div className="relative flex h-screen min-h-[1080px] w-full flex-col overflow-hidden bg-[#e6e6e6] font-['Open_Sans','Noto_Sans_CJK_SC',sans-serif]">
      <Header />
      <Ribbon />
      <FormulaBar />
      <main className="flex min-h-0 flex-1">
        <Sheet />
        <Pane />
      </main>
      <StatusBar />
      <Taskbar />
      <Watermark />
      <p className="pointer-events-none absolute inset-x-0 bottom-[78px] text-center text-[61px] leading-[68px] text-white [-webkit-text-stroke:7px_#000] [paint-order:stroke_fill]">
        选择你想要的趋势线类型
      </p>
    </div>
  );
}
